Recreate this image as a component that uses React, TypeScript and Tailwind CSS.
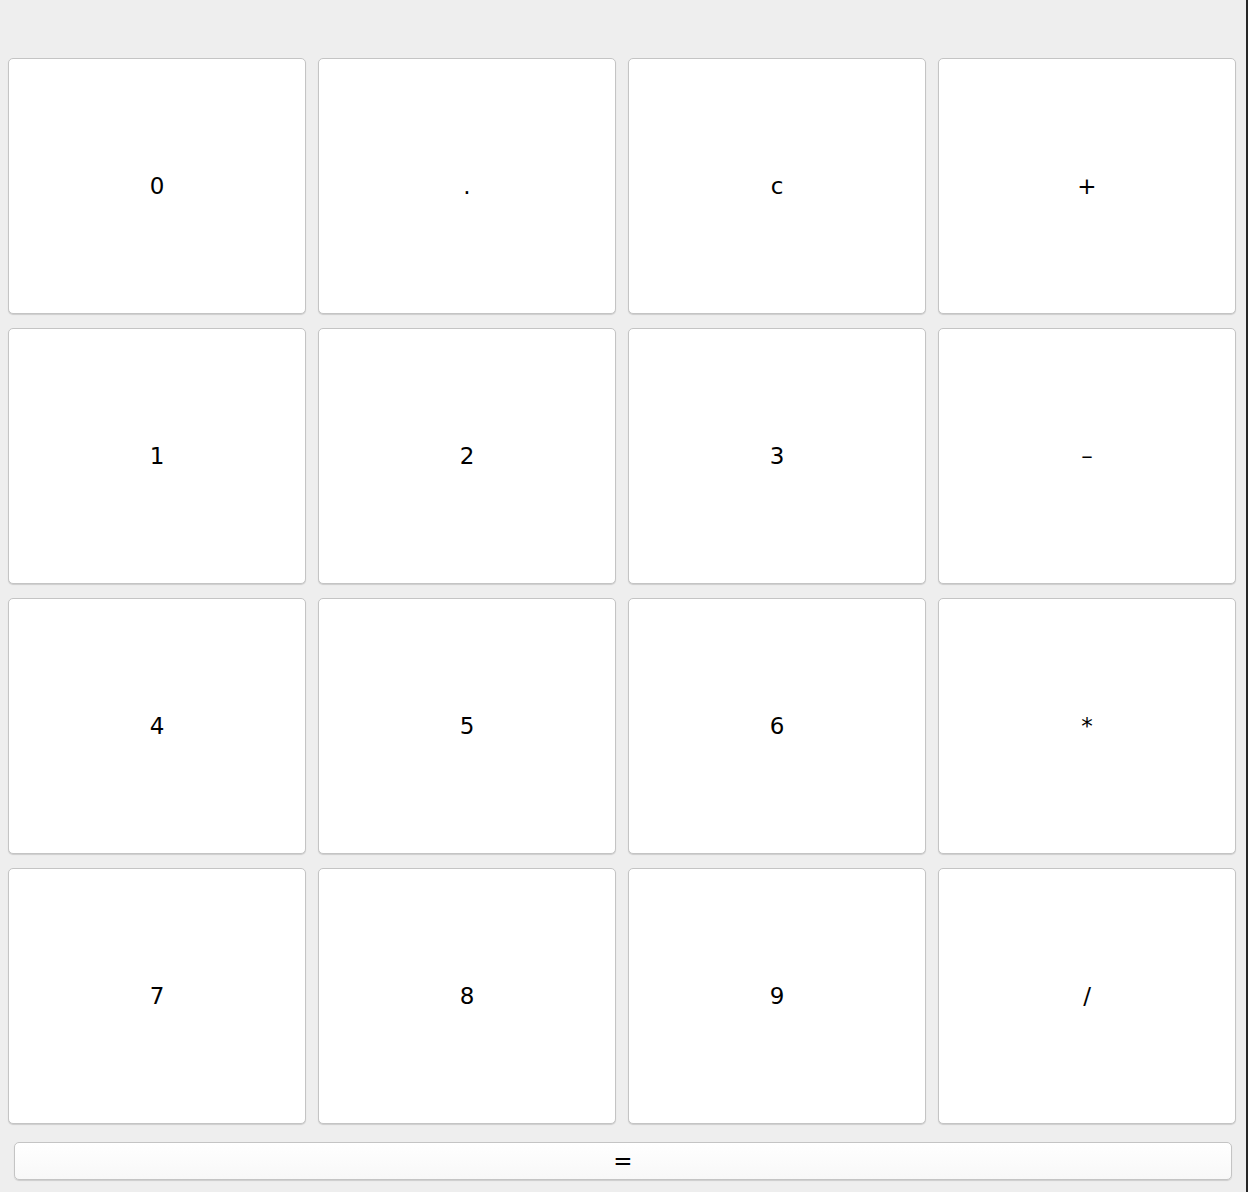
const keys = ["0", ".", "c", "+", "1", "2", "3", "–", "4", "5", "6", "*", "7", "8", "9", "/"]

const Key = ({ label }: { label: string }) => (
  <button className="h-[256px] rounded-[5px] border border-[#c4c4c4] bg-white text-[23px] text-black shadow-[0_1px_1px_rgba(0,0,0,0.14)] flex items-center justify-center">
    {label}
  </button>
)

export default function App() {
  return (
    <div
      className="w-[1248px] h-[1192px] bg-[#eeeeee] border-r-2 border-[#262626] pl-[8px] pr-[10px] pt-[58px]"
      style={{ fontFamily: '"DejaVu Sans", "Lucida Grande", sans-serif' }}
    >
      <div className="grid grid-cols-4 gap-x-[12px] gap-y-[14px]">
        {keys.map((k) => (
          <Key key={k} label={k} />
        ))}
      </div>
      <div className="pl-[6px] pr-[4px] mt-[18px]">
        <button className="w-full h-[38px] rounded-[5px] border border-[#c4c4c4] bg-gradient-to-b from-white to-[#f8f8f8] text-[23px] text-black shadow-[0_1px_1px_rgba(0,0,0,0.14)] flex items-center justify-center">
          =
        </button>
      </div>
    </div>
  )
}
